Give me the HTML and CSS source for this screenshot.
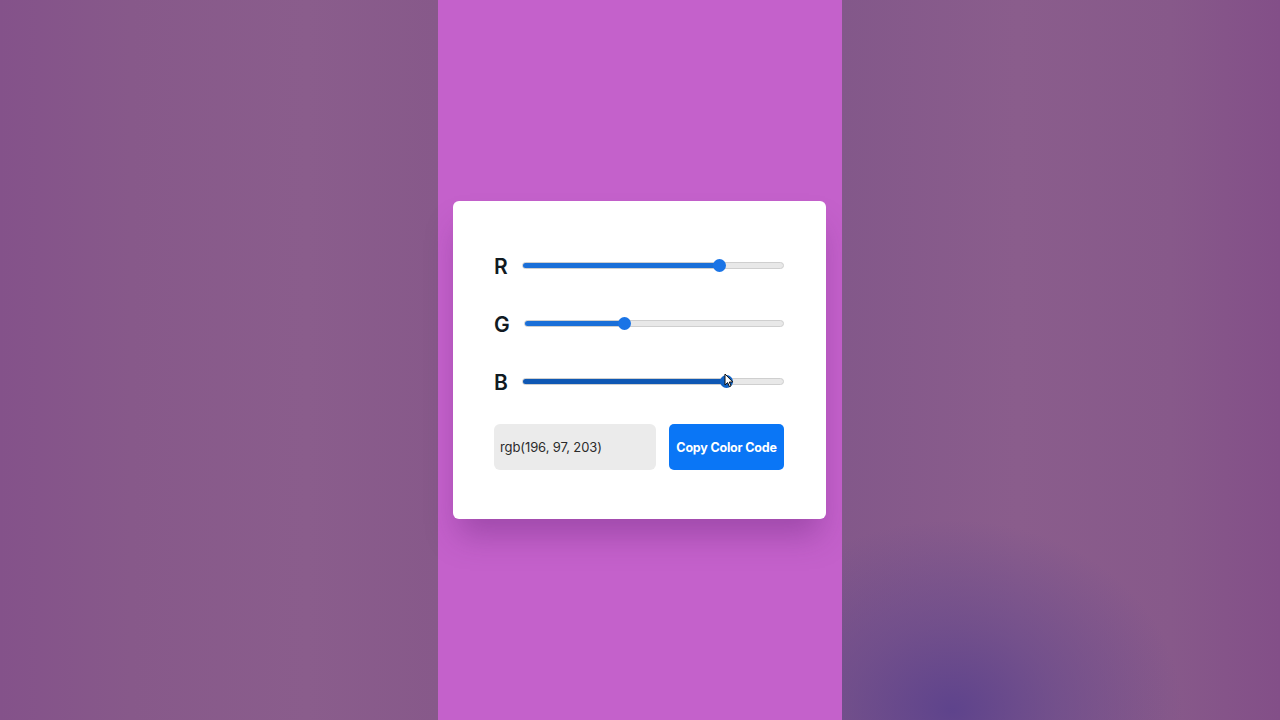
FILE: index.html
```html
<!DOCTYPE html>
<html lang="en">
<head>
<meta charset="utf-8">
<title>RGB Color Picker</title>
<link rel="stylesheet" href="styles.css">
</head>
<body>
  <div class="side side-left"></div>
  <main class="stage">
    <section class="card">
      <div class="row">
        <span class="label">R</span>
        <div class="slider">
          <div class="track"><div class="fill" style="width: 76.9%"></div></div>
          <div class="thumb" style="left: calc((100% - 13px) * 0.769)"></div>
        </div>
      </div>
      <div class="row">
        <span class="label">G</span>
        <div class="slider">
          <div class="track"><div class="fill" style="width: 38.6%"></div></div>
          <div class="thumb" style="left: calc((100% - 13px) * 0.380)"></div>
        </div>
      </div>
      <div class="row">
        <span class="label">B</span>
        <div class="slider active">
          <div class="track"><div class="fill" style="width: 79.1%"></div></div>
          <div class="thumb" style="left: calc((100% - 13px) * 0.796)">
            <svg class="cursor" width="10" height="15" viewBox="0 0 10 15"><path d="M1 1 L1 12 L3.6 9.6 L5.4 13.6 L7 12.9 L5.3 9 L8.8 9 Z" fill="#fff" stroke="#111" stroke-width="1" stroke-linejoin="round"/></svg>
          </div>
        </div>
      </div>
      <div class="actions">
        <div class="code">rgb(196, 97, 203)</div>
        <button class="copy" type="button">Copy Color Code</button>
      </div>
    </section>
  </main>
  <div class="side side-right"></div>
</body>
</html>
```

FILE: styles.css
```css
* { box-sizing: border-box; }

html, body {
  margin: 0;
  height: 100%;
}

body {
  display: flex;
  width: 1280px;
  height: 720px;
  overflow: hidden;
  font-family: "Inter", "Noto Sans", "Liberation Sans", sans-serif;
  background: #87598a;
}

.side {
  width: 438px;
  flex: none;
}

.side-left {
  background:
    linear-gradient(90deg, #84528a 0%, #87598a 30%, #8a5d8c 70%, #87598a 100%);
}

.side-right {
  background:
    radial-gradient(ellipse 230px 190px at 110px 710px, rgba(92, 66, 140, 0.95) 0%, rgba(100, 72, 140, 0.6) 45%, rgba(120, 80, 140, 0) 100%),
    linear-gradient(90deg, #83588a 0%, #8a5d8c 40%, #87598a 75%, #834f88 100%);
}

.stage {
  width: 404px;
  flex: none;
  background: #c461cb;
  display: flex;
  align-items: center;
  justify-content: center;
}

.card {
  width: 373px;
  height: 318px;
  margin-left: -1px;
  background: #ffffff;
  border-radius: 6px;
  padding: 49px 42px 49px 41px;
  box-shadow: 0 22px 30px -6px rgba(90, 30, 110, 0.35);
  display: flex;
  flex-direction: column;
  gap: 28px;
}

.row {
  height: 30px;
  display: flex;
  align-items: center;
  gap: 14px;
}

.label {
  font-size: 21px;
  font-weight: 600;
  color: #111a22;
  line-height: 1;
  padding-top: 2px;
}

.slider {
  position: relative;
  flex: 1;
  height: 13px;
  display: flex;
  align-items: center;
}

.track {
  width: 100%;
  height: 7px;
  border-radius: 4px;
  background: #e8e8e8;
  border: 1px solid #cfcfcf;
  overflow: hidden;
}

.fill {
  height: 100%;
  background: #1a6fd8;
}

.thumb {
  position: absolute;
  top: 0;
  width: 13px;
  height: 13px;
  border-radius: 50%;
  background: #1a74e6;
}

.active .fill { background: #0f58b4; }
.active .thumb { background: #1062c4; }

.cursor {
  position: absolute;
  left: 4px;
  top: -2px;
}

.actions {
  height: 46px;
  display: flex;
  gap: 13px;
}

.code {
  width: 162px;
  flex: none;
  background: #ebebeb;
  border-radius: 6px;
  display: flex;
  align-items: center;
  padding-left: 6px;
  font-size: 13px;
  color: #2b2b2b;
  letter-spacing: -0.1px;
}

.copy {
  flex: 1;
  border: none;
  border-radius: 5px;
  background: #0a76f6;
  color: #ffffff;
  font-family: inherit;
  font-size: 12.5px;
  font-weight: 700;
  letter-spacing: -0.2px;
  padding: 0;
}
```
